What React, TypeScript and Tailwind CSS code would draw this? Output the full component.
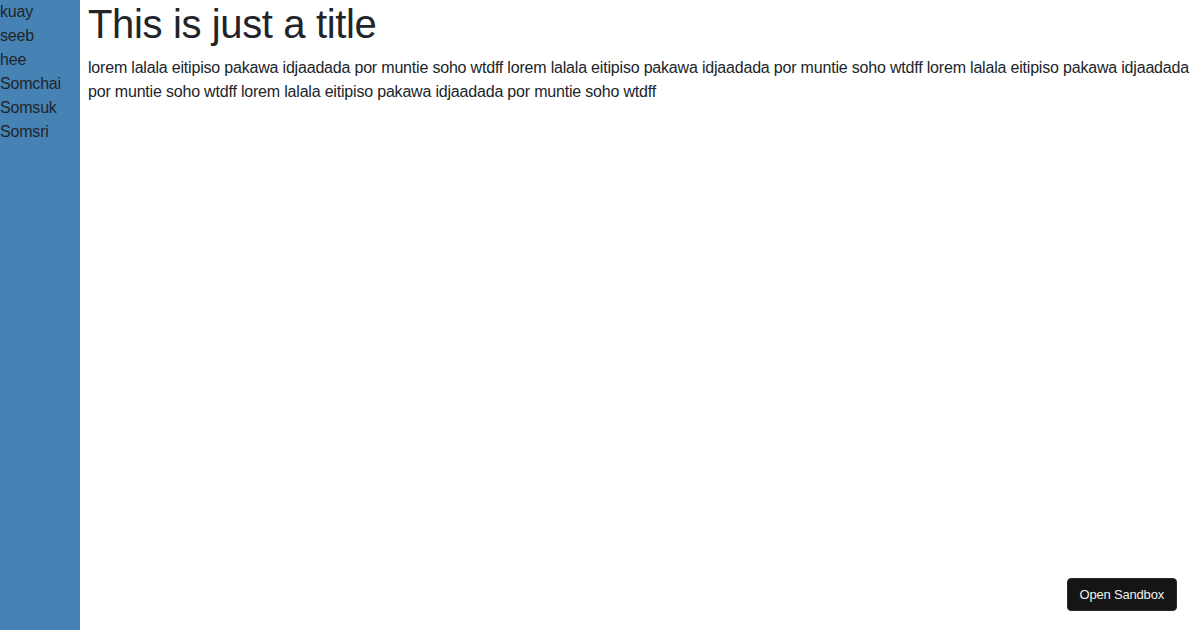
const items = ["kuay", "seeb", "hee", "Somchai", "Somsuk", "Somsri"];

const text =
  "lorem lalala eitipiso pakawa idjaadada por muntie soho wtdff lorem lalala eitipiso pakawa idjaadada por muntie soho wtdff lorem lalala eitipiso pakawa idjaadada por muntie soho wtdff lorem lalala eitipiso pakawa idjaadada por muntie soho wtdff";

export default function App() {
  return (
    <div className="relative flex h-[630px] w-full font-['Liberation_Sans',Arial,sans-serif] tracking-[-0.012em] text-[#212529]">
      {/* Sidebar */}
      <nav className="w-[80px] shrink-0 bg-[#4682b4]">
        {items.map((item) => (
          <div key={item} className="text-base leading-6">
            {item}
          </div>
        ))}
      </nav>

      {/* Main */}
      <main className="flex-1 px-2">
        <h1 className="mb-2 text-[40px] leading-[48px] font-normal tracking-[-0.009em]">This is just a title</h1>
        <p className="text-base leading-6">{text}</p>
      </main>

      <button className="absolute right-[23px] bottom-[19px] flex h-[33px] items-center rounded-[4px] border border-[#2a2a2a] bg-[#151515] px-3 text-[13px] text-[#f0f0f0]">
        Open Sandbox
      </button>
    </div>
  );
}
